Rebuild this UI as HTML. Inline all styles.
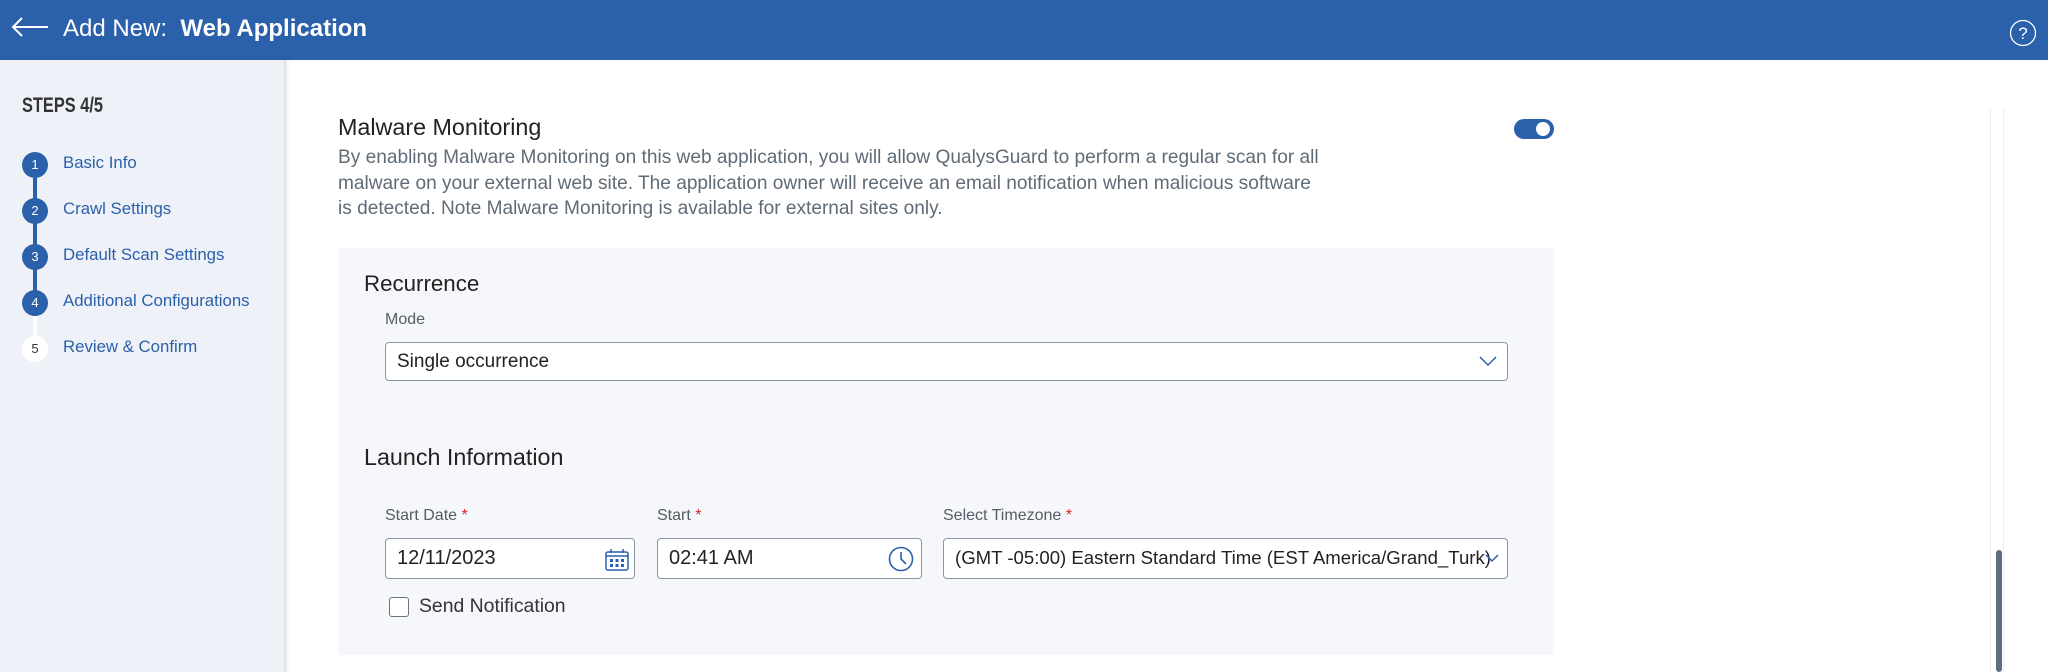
<!DOCTYPE html>
<html><head><meta charset="utf-8"><style>
*{box-sizing:border-box;margin:0;padding:0}
body{width:2048px;height:672px;overflow:hidden;background:#fff;font-family:"Liberation Sans",sans-serif;position:relative}
.hdr{position:absolute;left:0;top:0;width:2048px;height:60px;background:#2b60aa;color:#fff}
.side{position:absolute;left:0;top:60px;width:286px;height:612px;background:#eef2f8;border-right:2px solid #dfe3e8;box-shadow:2px 0 3px rgba(0,0,0,.08)}
.a{position:absolute;white-space:nowrap}
.circ{position:absolute;left:22px;width:26px;height:26px;border-radius:50%;background:#2b60aa;color:#fff;font-size:13px;text-align:center;line-height:26px}
.st{position:absolute;left:63px;color:#2b60aa;font-size:16.8px}
.panel{position:absolute;left:338px;top:248px;width:1216px;height:407px;background:#f5f7fa}
.box{position:absolute;border:1px solid #8a96a3;border-radius:4px;background:#fff;font-size:20px;color:#222;padding-left:11px;line-height:38px;white-space:nowrap}
.lbl{position:absolute;font-size:16px;color:#555d66}
.lbl b{color:#d0281c;font-weight:normal}
</style></head><body>
<div class="hdr">
<svg class="a" style="left:10px;top:16px" width="40" height="22" viewBox="0 0 40 22"><path d="M38 11H3M12 2L3 11l9 9" stroke="#fff" stroke-width="2" fill="none"/></svg>
<div class="a" style="left:63px;top:15px;font-size:24px">Add New:&nbsp; <b>Web Application</b></div>
<svg class="a" style="left:2009px;top:19px" width="28" height="28" viewBox="0 0 28 28"><circle cx="14" cy="14" r="12.5" stroke="#fff" stroke-width="1.3" fill="none"/><text x="14" y="20" fill="#fff" font-size="17" text-anchor="middle" font-family="Liberation Sans">?</text></svg>
</div>
<div class="side">
<div class="a" style="left:22px;top:34px;font-size:21px;font-weight:bold;color:#333;transform:scaleX(.78);transform-origin:left">STEPS 4/5</div>
<div class="a" style="left:33px;top:118px;width:4px;height:170px;background:#2b60aa"></div>
<div class="a" style="left:33px;top:256px;width:4px;height:30px;background:#fff"></div>
<div class="circ" style="top:92px">1</div><div class="st" style="top:93px">Basic Info</div>
<div class="circ" style="top:138px">2</div><div class="st" style="top:139px">Crawl Settings</div>
<div class="circ" style="top:184px">3</div><div class="st" style="top:185px">Default Scan Settings</div>
<div class="circ" style="top:230px">4</div><div class="st" style="top:231px">Additional Configurations</div>
<div class="circ" style="top:276px;background:#fff;color:#333">5</div><div class="st" style="top:277px">Review &amp; Confirm</div>
</div>
<div class="a" style="left:338px;top:114px;font-size:23.3px;color:#222">Malware Monitoring</div>
<div class="a" style="left:338px;top:145px;font-size:19.1px;color:#5f6b76;line-height:25.5px">By enabling Malware Monitoring on this web application, you will allow QualysGuard to perform a regular scan for all<br>malware on your external web site. The application owner will receive an email notification when malicious software<br>is detected. Note Malware Monitoring is available for external sites only.</div>
<div class="a" style="left:1514px;top:119px;width:40px;height:20px;border-radius:10px;background:#2b60aa"><div class="a" style="left:22px;top:3px;width:14px;height:14px;border-radius:50%;background:#fff"></div></div>
<div class="panel"></div>
<div class="a" style="left:364px;top:271px;font-size:22.3px;color:#222">Recurrence</div>
<div class="lbl" style="left:385px;top:311px">Mode</div>
<div class="box" style="left:385px;top:342px;width:1123px;height:39px;font-size:19px">Single occurrence
<svg class="a" style="right:10px;top:12px" width="18" height="12" viewBox="0 0 18 12"><path d="M1 2l8 8 8-8" stroke="#2b60aa" stroke-width="1.5" fill="none"/></svg></div>
<div class="a" style="left:364px;top:444px;font-size:23.3px;color:#222">Launch Information</div>
<div class="lbl" style="left:385px;top:507px">Start Date <b>*</b></div>
<div class="lbl" style="left:657px;top:507px">Start <b>*</b></div>
<div class="lbl" style="left:943px;top:507px">Select Timezone <b>*</b></div>
<div class="box" style="left:385px;top:538px;width:250px;height:41px">12/11/2023
<svg class="a" style="right:5px;top:10px" width="24" height="22" viewBox="0 0 24 22"><rect x="1" y="3" width="22" height="18" rx="2" stroke="#2b60aa" stroke-width="1.5" fill="none"/><path d="M1 7h22M6 0v4M18 0v4" stroke="#2b60aa" stroke-width="1.5"/><path d="M5 10h3v3H5zM10.5 10h3v3h-3zM16 10h3v3h-3zM5 15h3v3H5zM10.5 15h3v3h-3zM16 15h3v3h-3z" fill="#2b60aa"/></svg></div>
<div class="box" style="left:657px;top:538px;width:265px;height:41px">02:41 AM
<svg class="a" style="right:7px;top:7px" width="26" height="26" viewBox="0 0 26 26"><circle cx="13" cy="13" r="11.5" stroke="#2b60aa" stroke-width="1.6" fill="none"/><path d="M13 6v7l5 5" stroke="#2b60aa" stroke-width="1.6" fill="none"/></svg></div>
<div class="box" style="left:943px;top:538px;width:565px;height:41px;overflow:hidden;font-size:18.6px">(GMT -05:00) Eastern Standard Time (EST America/Grand_Turk)
<svg class="a" style="right:8px;top:14px" width="14" height="10" viewBox="0 0 14 10"><path d="M1 2l6 6 6-6" stroke="#2b60aa" stroke-width="1.5" fill="none"/></svg></div>
<div class="a" style="left:389px;top:597px;width:20px;height:20px;border:1.5px solid #6b7580;border-radius:3px;background:#fff"></div>
<div class="a" style="left:419px;top:595px;font-size:19.4px;color:#333">Send Notification</div>
<div class="a" style="left:1990px;top:108px;width:14px;height:564px;border-left:1px solid #eceef0;border-right:1px solid #eceef0"></div>
<div class="a" style="left:1996px;top:550px;width:6px;height:122px;background:#5e6e7e;border-radius:3px"></div>
</body></html>
